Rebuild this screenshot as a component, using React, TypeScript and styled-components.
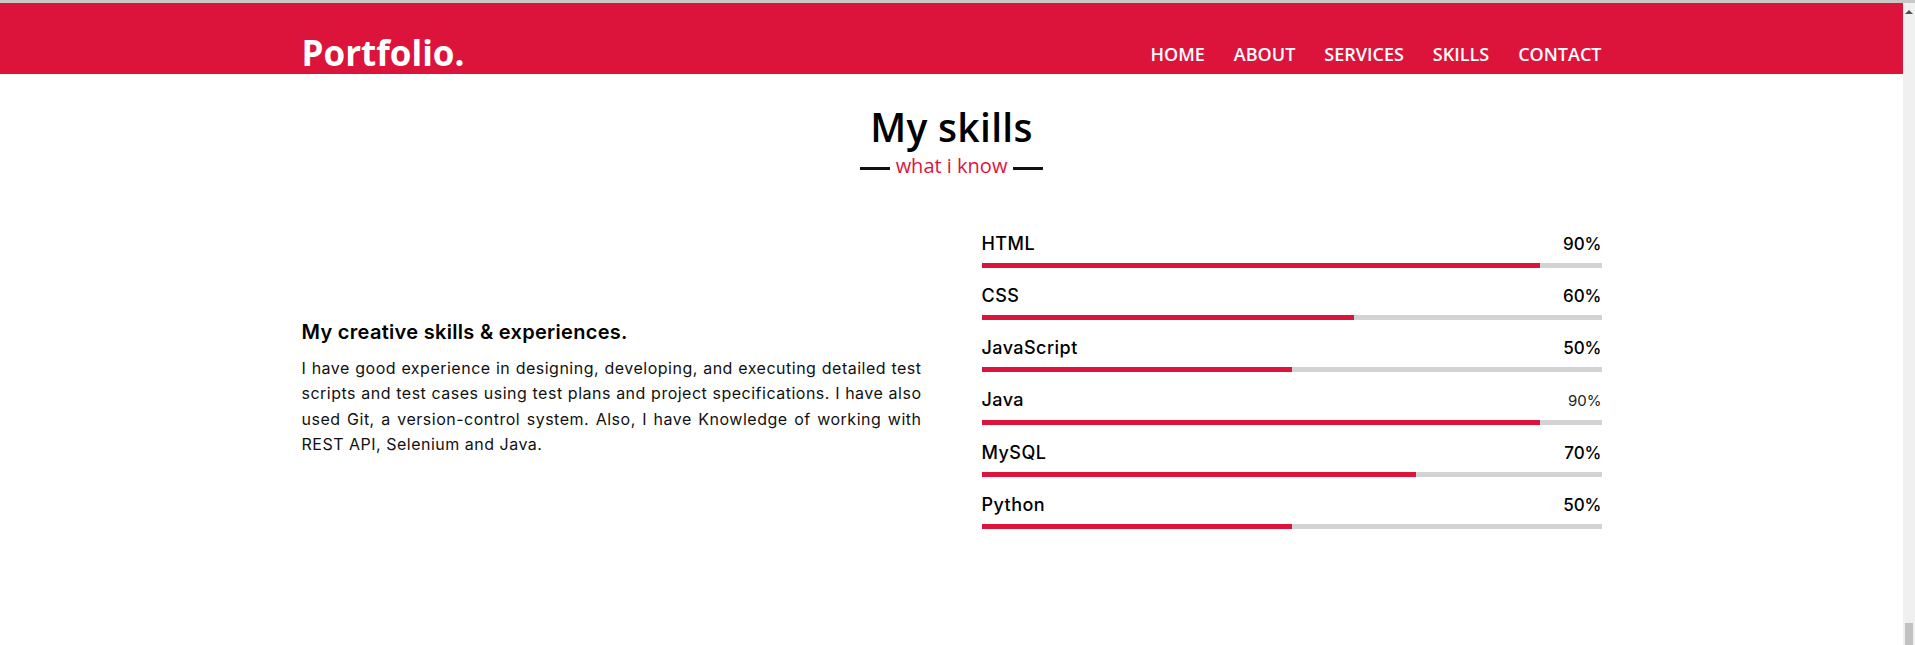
import React from 'react'
import styled, { createGlobalStyle } from 'styled-components'

const GlobalStyle = createGlobalStyle`
  html, body {
    margin: 0;
    padding: 0;
    background: #ffffff;
    overflow: hidden;
  }
  * {
    box-sizing: border-box;
  }
`

const RED = '#dc143c'

const Frame = styled.div`
  height: 100vh;
  display: flex;
  flex-direction: column;
  border-top: 3px solid #c9c9c9;
`

const Viewport = styled.div`
  flex: 1;
  display: flex;
  min-height: 0;
`

const Page = styled.div`
  flex: 1;
  overflow: hidden;
`

const Header = styled.header`
  background-color: ${RED};
  height: 71px;
`

const HeaderInner = styled.div`
  width: 1300px;
  height: 100%;
  margin: 0 auto;
  display: flex;
  justify-content: space-between;
  align-items: flex-end;
`

const Logo = styled.a`
  font-family: 'Open Sans', sans-serif;
  font-weight: 700;
  font-size: 35px;
  line-height: 1;
  color: #ffffff;
  text-decoration: none;
  margin-bottom: 4px;
`

const Nav = styled.nav`
  display: flex;
  gap: 29px;
  margin-bottom: 11px;
`

const NavLink = styled.a`
  font-family: 'Open Sans', sans-serif;
  font-weight: 600;
  font-size: 18px;
  line-height: 1;
  color: #ffffff;
  text-decoration: none;
  text-transform: uppercase;
`

const Section = styled.section`
  width: 1300px;
  margin: 0 auto;
  padding-top: 30px;
`

const Title = styled.h2`
  margin: 0;
  text-align: center;
  font-family: 'Open Sans', sans-serif;
  font-weight: 600;
  font-size: 39px;
  line-height: 46px;
  letter-spacing: 0.3px;
  color: #000000;
`

const SubTitle = styled.div`
  display: flex;
  justify-content: center;
  align-items: center;
  gap: 6px;
  margin-top: 4px;
  font-family: 'Open Sans', sans-serif;
  font-weight: 500;
  font-size: 20px;
  line-height: 24px;
  color: ${RED};

  &::before,
  &::after {
    content: '';
    width: 30px;
    height: 3px;
    margin-top: 4px;
    background-color: #111111;
  }
`

const Columns = styled.div`
  display: grid;
  grid-template-columns: 620px 620px;
  column-gap: 60px;
  align-items: center;
  margin-top: 54px;
`

const About = styled.div`
  padding-top: 16px;
`

const AboutHeading = styled.h3`
  margin: 0 0 12px 0;
  font-family: 'Inter', sans-serif;
  font-weight: 600;
  font-size: 20px;
  line-height: 24px;
  letter-spacing: 0.3px;
  color: #000000;
`

const AboutText = styled.p`
  margin: 0;
  font-family: 'Inter', sans-serif;
  font-size: 16px;
  line-height: 25.3px;
  letter-spacing: 0.5px;
  text-align: justify;
  color: #111111;
`

const Bars = styled.div`
  display: flex;
  flex-direction: column;
  gap: 16px;
`

const Skill = styled.div`
  display: flex;
  flex-direction: column;
`

const SkillInfo = styled.div`
  display: flex;
  justify-content: space-between;
  align-items: baseline;
  font-family: 'Inter', sans-serif;
  color: #000000;
  line-height: 24px;
`

const SkillName = styled.span`
  font-size: 18px;
  font-weight: 500;
  letter-spacing: 0.45px;
`

const SkillPercent = styled.span<{ $small?: boolean }>`
  font-size: ${p => (p.$small ? '15px' : '17px')};
  font-weight: ${p => (p.$small ? 400 : 500)};
  color: ${p => (p.$small ? '#222222' : '#000000')};
`

const Track = styled.div`
  margin-top: 7px;
  height: 5px;
  background-color: #d3d3d3;
`

const Fill = styled.div`
  height: 100%;
  background-color: ${RED};
`

const ScrollTrack = styled.div`
  width: 12px;
  background-color: #f0f0f0;
  display: flex;
  flex-direction: column;
  align-items: center;
`

const ScrollArrow = styled.div`
  margin-top: 7px;
  width: 0;
  height: 0;
  border-left: 4px solid transparent;
  border-right: 4px solid transparent;
  border-bottom: 4px solid #505050;
`

const ScrollThumb = styled.div`
  margin-top: auto;
  width: 8px;
  height: 22px;
  background-color: #c1c1c1;
`

const skills = [
  { name: 'HTML', pct: 90 },
  { name: 'CSS', pct: 60 },
  { name: 'JavaScript', pct: 50 },
  { name: 'Java', pct: 90, small: true },
  { name: 'MySQL', pct: 70 },
  { name: 'Python', pct: 50 },
]

const links = ['Home', 'About', 'Services', 'Skills', 'Contact']

export default function App() {
  return (
    <>
      <GlobalStyle />
      <Frame>
        <Viewport>
          <Page>
            <Header>
              <HeaderInner>
                <Logo href="#">Portfolio.</Logo>
                <Nav>
                  {links.map(l => (
                    <NavLink key={l} href="#">{l}</NavLink>
                  ))}
                </Nav>
              </HeaderInner>
            </Header>

            <Section>
              <Title>My skills</Title>
              <SubTitle>what i know</SubTitle>

              <Columns>
                <About>
                  <AboutHeading>My creative skills &amp; experiences.</AboutHeading>
                  <AboutText>
                    I have good experience in designing, developing, and executing detailed test
                    scripts and test cases using test plans and project specifications. I have also
                    used Git, a version-control system. Also, I have Knowledge of working with
                    REST API, Selenium and Java.
                  </AboutText>
                </About>

                <Bars>
                  {skills.map(s => (
                    <Skill key={s.name}>
                      <SkillInfo>
                        <SkillName>{s.name}</SkillName>
                        <SkillPercent $small={s.small}>{s.pct}%</SkillPercent>
                      </SkillInfo>
                      <Track>
                        <Fill style={{ width: `${s.pct}%` }} />
                      </Track>
                    </Skill>
                  ))}
                </Bars>
              </Columns>
            </Section>
          </Page>
          <ScrollTrack>
            <ScrollArrow />
            <ScrollThumb />
          </ScrollTrack>
        </Viewport>
      </Frame>
    </>
  )
}
